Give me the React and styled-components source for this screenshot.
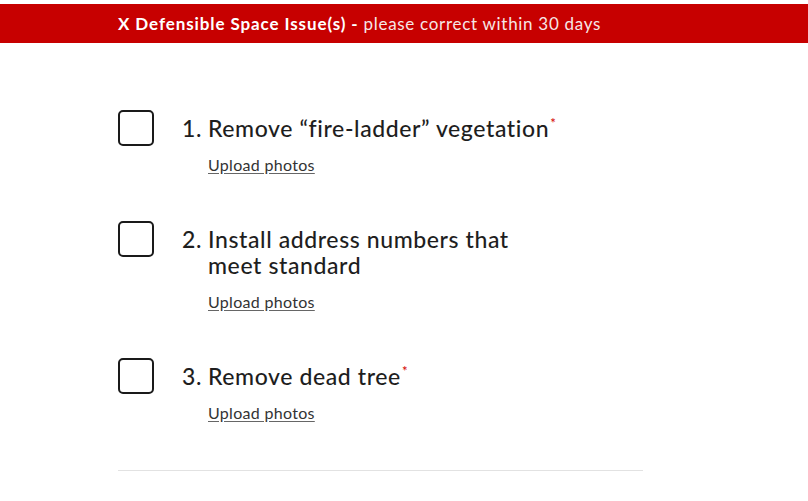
import React from "react";
import styled, { createGlobalStyle } from "styled-components";

const Global = createGlobalStyle`
  html, body { margin: 0; padding: 0; background: #fff; }
  body { font-family: Lato, "Open Sans", sans-serif; color: #222; }
`;

const Page = styled.div`
  padding-top: 4px;
  width: 808px;
`;

const Banner = styled.div`
  height: 39px;
  background: #c70000;
  color: #fff;
  display: flex;
  align-items: center;
  padding-left: 118px;
  font-size: 17px;
  box-sizing: border-box;
`;

const Strong = styled.span`
  font-weight: 700;
  letter-spacing: 0.9px;
  margin-right: 5px;
`;

const Light = styled.span`
  font-weight: 400;
  letter-spacing: 0.7px;
  color: #f6e6e6;
`;

const List = styled.div`
  display: flex;
  flex-direction: column;
  gap: 46px;
  padding: 67px 0 0 118px;
  width: 525px;
`;

const Item = styled.div`
  display: flex;
  align-items: flex-start;
  gap: 28px;
`;

const Box = styled.div`
  width: 36px;
  height: 36px;
  box-sizing: border-box;
  border: 2px solid #1a1a1a;
  border-radius: 5px;
  flex-shrink: 0;
`;

const Body = styled.div`
  padding-top: 5px;
  display: flex;
  flex-direction: column;
`;

const Title = styled.div`
  display: flex;
  font-size: 23px;
  line-height: 26px;
  letter-spacing: 0.6px;
  font-weight: 500;
  color: #1e1e1e;
  max-width: 381px;
`;

const Num = styled.span`
  width: 26px;
  flex-shrink: 0;
`;

const Req = styled.span`
  color: #d40000;
  font-size: 13px;
  vertical-align: top;
  line-height: 16px;
  margin-left: 1px;
`;

const Upload = styled.a`
  margin: 14px 0 0 26px;
  font-size: 16px;
  line-height: 20px;
  letter-spacing: 0.3px;
  color: #333;
  text-decoration: underline;
  text-decoration-color: #666;
  text-underline-offset: 2px;
  cursor: pointer;
`;

const Divider = styled.hr`
  margin: 47px 0 0 118px;
  width: 525px;
  border: none;
  border-top: 1px solid #e2e2e2;
`;

const items = [
  { n: "1.", text: "Remove \u201cfire-ladder\u201d vegetation", req: true },
  { n: "2.", text: "Install address numbers that meet standard", req: false },
  { n: "3.", text: "Remove dead tree", req: true },
];

export default function App() {
  return (
    <Page>
      <Global />
      <Banner>
        <Strong>X Defensible Space Issue(s) -</Strong>
        <Light>please correct within 30 days</Light>
      </Banner>
      <List>
        {items.map((it) => (
          <Item key={it.n}>
            <Box />
            <Body>
              <Title>
                <Num>{it.n}</Num>
                <span>
                  {it.text}
                  {it.req && <Req>*</Req>}
                </span>
              </Title>
              <Upload>Upload photos</Upload>
            </Body>
          </Item>
        ))}
      </List>
      <Divider />
    </Page>
  );
}
